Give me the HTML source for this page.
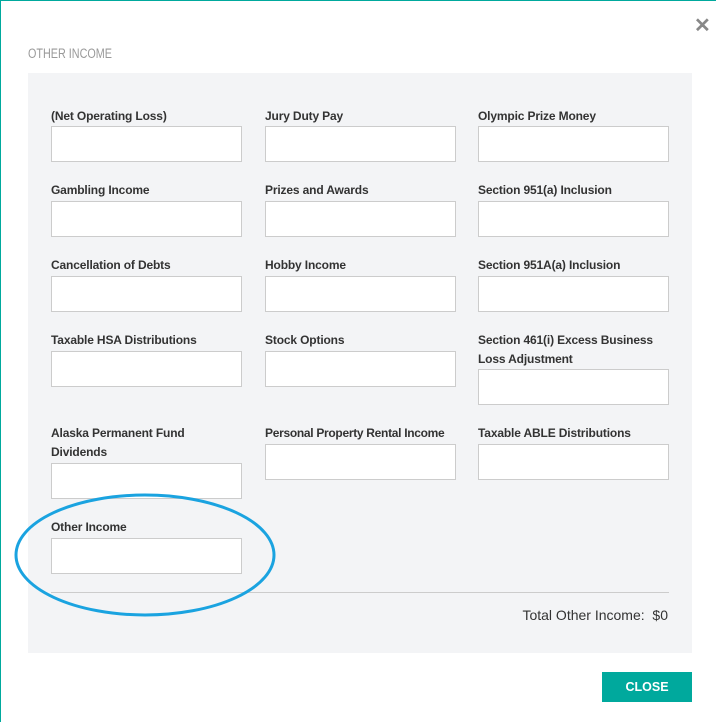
<!DOCTYPE html>
<html><head><style>
*{box-sizing:border-box;margin:0;padding:0}
body{width:716px;height:722px;background:#fff;font-family:"Liberation Sans",sans-serif;position:relative;overflow:hidden}
.abs{position:absolute}
.title{left:28px;top:46px;font-size:13.5px;color:#999;transform:scaleX(.8);transform-origin:left;white-space:nowrap}
.x{left:694px;top:13px;font-size:20px;color:#888;font-weight:bold}
.panel{left:28px;top:73px;width:664px;height:580px;background:#f3f4f6}
.lbl{font-size:12px;font-weight:bold;color:#333;line-height:19px;width:195px;letter-spacing:-.15px;margin-top:1px}
.inp{width:191px;height:36px;background:#fff;border:1px solid #ccc}
.div{left:51px;top:592px;width:618px;height:1px;background:#ccc}
.tot{right:48px;top:607px;font-size:14px;color:#333}
.btn{left:602px;top:672px;width:90px;height:30px;background:#00a99d;color:#fff;font-weight:bold;font-size:12.5px;text-align:center;line-height:30px}
</style></head><body>
<div class="abs" style="left:0;top:0;width:716px;height:1px;background:#00a99d"></div>
<div class="abs" style="left:0;top:0;width:1px;height:722px;background:#00a99d"></div>
<div class="abs title">OTHER INCOME</div>
<div class="abs x">✕</div>
<div class="abs panel"></div>

<div class="abs lbl" style="left:51px;top:106px">(Net Operating Loss)</div>
<div class="abs inp" style="left:51px;top:126px"></div>
<div class="abs lbl" style="left:265px;top:106px">Jury Duty Pay</div>
<div class="abs inp" style="left:265px;top:126px"></div>
<div class="abs lbl" style="left:478px;top:106px">Olympic Prize Money</div>
<div class="abs inp" style="left:478px;top:126px"></div>

<div class="abs lbl" style="left:51px;top:180px">Gambling Income</div>
<div class="abs inp" style="left:51px;top:201px"></div>
<div class="abs lbl" style="left:265px;top:180px">Prizes and Awards</div>
<div class="abs inp" style="left:265px;top:201px"></div>
<div class="abs lbl" style="left:478px;top:180px">Section 951(a) Inclusion</div>
<div class="abs inp" style="left:478px;top:201px"></div>

<div class="abs lbl" style="left:51px;top:255px">Cancellation of Debts</div>
<div class="abs inp" style="left:51px;top:276px"></div>
<div class="abs lbl" style="left:265px;top:255px">Hobby Income</div>
<div class="abs inp" style="left:265px;top:276px"></div>
<div class="abs lbl" style="left:478px;top:255px">Section 951A(a) Inclusion</div>
<div class="abs inp" style="left:478px;top:276px"></div>

<div class="abs lbl" style="left:51px;top:330px">Taxable HSA Distributions</div>
<div class="abs inp" style="left:51px;top:351px"></div>
<div class="abs lbl" style="left:265px;top:330px">Stock Options</div>
<div class="abs inp" style="left:265px;top:351px"></div>
<div class="abs lbl" style="left:478px;top:330px">Section 461(i) Excess Business Loss Adjustment</div>
<div class="abs inp" style="left:478px;top:369px"></div>

<div class="abs lbl" style="left:51px;top:423px">Alaska Permanent Fund<br>Dividends</div>
<div class="abs inp" style="left:51px;top:463px"></div>
<div class="abs lbl" style="left:265px;top:423px;white-space:nowrap;letter-spacing:-.3px">Personal Property Rental Income</div>
<div class="abs inp" style="left:265px;top:444px"></div>
<div class="abs lbl" style="left:478px;top:423px">Taxable ABLE Distributions</div>
<div class="abs inp" style="left:478px;top:444px"></div>

<div class="abs lbl" style="left:51px;top:517px">Other Income</div>
<div class="abs inp" style="left:51px;top:538px"></div>

<div class="abs div"></div>
<div class="abs tot">Total Other Income:&nbsp; $0</div>
<div class="abs btn">CLOSE</div>

<svg class="abs" style="left:0;top:0" width="716" height="722"><ellipse cx="145" cy="555" rx="129" ry="60" fill="none" stroke="#1aa3e0" stroke-width="3"/></svg>
</body></html>
